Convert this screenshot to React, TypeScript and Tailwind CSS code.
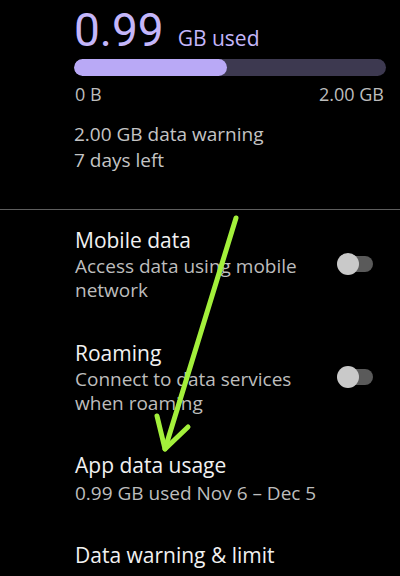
import React from "react";

const font = { fontFamily: "'Open Sans', Roboto, sans-serif" };

function Toggle() {
  return (
    <div className="relative h-[22px] w-[36px] shrink-0">
      <div className="absolute right-0 top-[3px] h-[16px] w-[30px] rounded-full bg-[#5a5a5a]" />
      <div className="absolute left-0 top-0 h-[22px] w-[22px] rounded-full bg-[#c9c9c9]" />
    </div>
  );
}

function Setting({
  title,
  lines,
  toggle,
  className = "py-[18px]",
  subClass = "",
}: {
  title: string;
  lines: string[];
  toggle?: boolean;
  className?: string;
  subClass?: string;
}) {
  return (
    <div className={"flex items-center pl-[75px] pr-[27px] " + className}>
      <div className="flex-1">
        <div className="text-[21px] leading-[28px] text-[#f1f1f1]">{title}</div>
        <div className={"text-[19px] leading-[24px] text-[#bdbdbd] " + subClass}>
          {lines.map((l) => (
            <div key={l}>{l}</div>
          ))}
        </div>
      </div>
      {toggle && <Toggle />}
    </div>
  );
}

export default function App() {
  return (
    <div className="relative h-[576px] w-[400px] overflow-hidden bg-black" style={font}>
      <div className="pl-[74px] pr-[14px] pt-[2px]">
        <div className="flex items-baseline text-[#c4b6fa]">
          <span className="font-['Roboto',sans-serif] text-[46px] leading-[56px]">0.99</span>
          <span className="ml-[14px] text-[21px] leading-none">GB used</span>
        </div>
        <div className="mt-[1px] h-[17px] w-full overflow-hidden rounded-full bg-[#3d3950]">
          <div className="h-full w-[49%] rounded-full bg-[#b9a9f6]" />
        </div>
        <div className="mt-[6px] flex justify-between text-[18px] leading-[24px] text-[#bdbdbd]">
          <span className="pl-px">0 B</span>
          <span className="pr-[2px]">2.00 GB</span>
        </div>
        <div className="mt-[15px] text-[19px] leading-[26px] text-[#c4c4c4]">
          <div>2.00 GB data warning</div>
          <div>7 days left</div>
        </div>
      </div>

      <div className="mt-[36px] h-px w-full bg-[#5e5e5e]" />

      <Setting
        title="Mobile data"
        lines={["Access data using mobile", "network"]}
        toggle
        className="pt-[16px] pb-[19px]"
      />
      <Setting title="Roaming" lines={["Connect to data services", "when roaming"]} toggle />
      <Setting title="App data usage" lines={["0.99 GB used Nov 6 – Dec 5"]} subClass="pt-[2px]" />
      <Setting title="Data warning & limit" lines={[]} />

      {/* green annotation arrow */}
      <svg
        className="pointer-events-none absolute left-0 top-0"
        width="400"
        height="576"
        viewBox="0 0 400 576"
        fill="none"
        stroke="#a3f03b"
        strokeWidth="5"
        strokeLinecap="round"
        strokeLinejoin="round"
      >
        <path d="M236 218 L165 449" />
        <path d="M157 416 L165 449 L188 427" />
      </svg>
    </div>
  );
}
